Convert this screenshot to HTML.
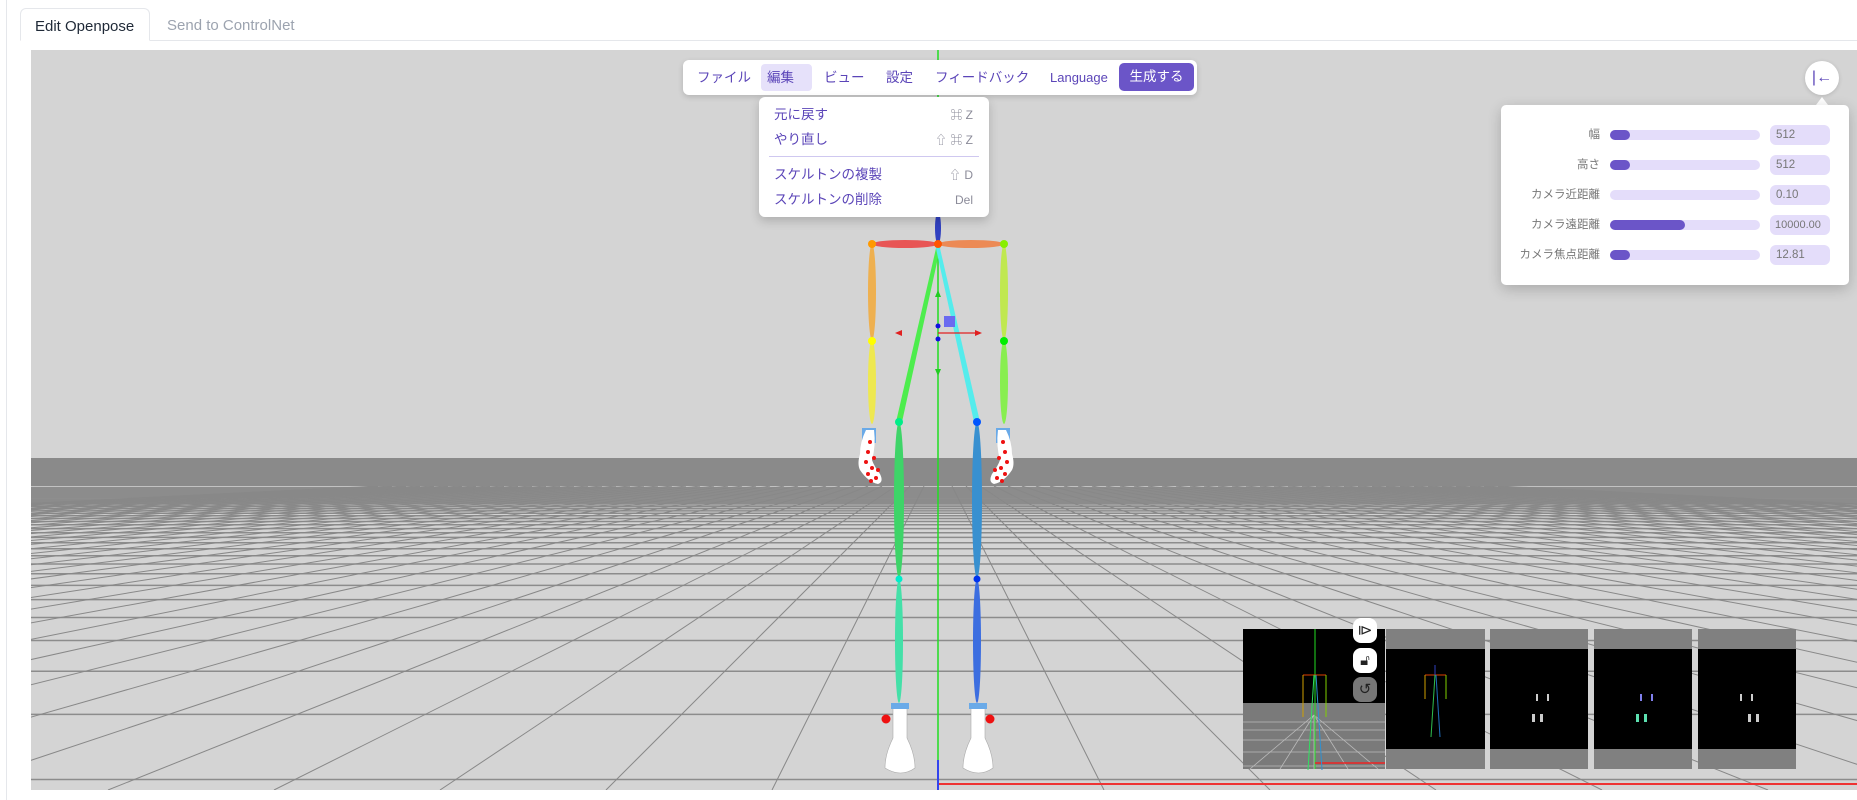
<!DOCTYPE html>
<html><head><meta charset="utf-8">
<style>
*{box-sizing:border-box;margin:0;padding:0}
body{width:1857px;height:790px;overflow:hidden;background:#fff;font-family:"Liberation Sans","Noto Sans CJK JP",sans-serif;position:relative}
.abs{position:absolute}
#outer{left:6px;top:0;width:1860px;height:800px;border-left:1px solid #e5e7eb}
#tabline{left:20px;top:40px;width:1837px;height:1px;background:#e5e7eb}
#tab1{left:20px;top:8px;width:130px;height:33px;border:1px solid #e5e7eb;border-bottom:1px solid #fff;border-radius:6px 6px 0 0;background:#fff;font-size:15px;color:#1f2937;padding:9px 0 0 14px}
#tab2{left:167px;top:17px;font-size:15px;color:#9ca3af}
#scene{left:0;top:0}
#menu{left:683px;top:60px;width:514px;height:35px;background:#fff;border-radius:6px;box-shadow:0 2px 6px rgba(0,0,0,.15);font-size:13.5px;color:#5b45b8}
#menu span{position:absolute;top:1px;line-height:33px}
#dd{left:759px;top:97px;width:230px;height:120px;background:#fff;border-radius:6px;box-shadow:0 4px 10px rgba(0,0,0,.18);font-size:13.5px;color:#5b45b8}
#dd .l{position:absolute;left:15px;line-height:18px}
#dd .r{position:absolute;right:16px;color:#8b8b99;font-size:12px;line-height:18px}
#panel{left:1501px;top:105px;width:348px;height:180px;background:#fff;border-radius:5px;box-shadow:0 4px 14px rgba(0,0,0,.2);font-size:11.5px;color:#777}
.lab{position:absolute;right:249px;text-align:right;white-space:nowrap;line-height:16px}
.trk{position:absolute;left:109px;width:150px;height:10px;border-radius:5px;background:#e4ddfa}
.fill{position:absolute;left:0;top:0;height:10px;border-radius:5px;background:#6b55c8}
.inp{position:absolute;left:269px;width:60px;height:20px;border-radius:6px;background:#e4ddfa;font-size:11.5px;color:#777;padding:4px 0 0 6px}
#circ{left:1805px;top:61px;width:34px;height:34px;border-radius:50%;background:#fff;box-shadow:0 1px 4px rgba(0,0,0,.15);color:#5b45b8;font-size:16px;text-align:center;line-height:33px}
.sbtn{position:absolute;left:1353px;width:24px;height:25px;border-radius:8px;background:#fff;font-size:15px;text-align:center;line-height:25px;color:#222}
</style></head><body>
<div class="abs" id="outer"></div>
<div class="abs" id="tabline"></div>
<div class="abs" id="tab1">Edit Openpose</div>
<div class="abs" id="tab2">Send to ControlNet</div>

<svg id="scene" class="abs" width="1857" height="790" viewBox="0 0 1857 790">
<defs><clipPath id="cv"><rect x="31" y="50" width="1826" height="740"/></clipPath></defs>
<g clip-path="url(#cv)">
<rect x="31" y="50" width="1826" height="740" fill="#d4d4d4"/>
<g id="grid" stroke="#888" stroke-width="1"></g>
<rect x="31" y="458" width="1826" height="28" fill="#8a8a8a"/>
<!-- axes -->
<line x1="938" y1="50" x2="938" y2="790" stroke="#22dd22" stroke-width="1.5"/>
<line x1="938" y1="784" x2="1857" y2="784" stroke="#ee3333" stroke-width="2"/>
<line x1="938" y1="760" x2="938" y2="790" stroke="#3344ee" stroke-width="2"/>
<ellipse cx="938" cy="228" rx="3" ry="16" fill="#3040c0"/>
<ellipse cx="905" cy="244" rx="33" ry="4" fill="#e85555"/>
<ellipse cx="971" cy="244" rx="33" ry="4" fill="#ec8a55"/>
<ellipse cx="872" cy="292" rx="4" ry="48" fill="#eeb050"/>
<ellipse cx="872" cy="382" rx="4" ry="42" fill="#eee850"/>
<ellipse cx="1004" cy="292" rx="4" ry="48" fill="#c0e850"/>
<ellipse cx="1004" cy="382" rx="4" ry="42" fill="#88ee50"/>
<polygon points="937,244 941,244 902,422 896,422" fill="#4ded4d"/>
<polygon points="935,244 939,244 980,422 974,422" fill="#55ecec"/>
<ellipse cx="899" cy="500" rx="5" ry="78" fill="#3ed468"/>
<ellipse cx="899" cy="641" rx="4" ry="62" fill="#44e0a8"/>
<ellipse cx="977" cy="500" rx="5" ry="78" fill="#3890d0"/>
<ellipse cx="977" cy="641" rx="4" ry="62" fill="#3c6ee0"/>
<circle cx="938" cy="244" r="4" fill="#ff5500"/>
<circle cx="872" cy="244" r="4" fill="#ff9900"/>
<circle cx="1004" cy="244" r="4" fill="#88ee00"/>
<circle cx="872" cy="341" r="4" fill="#ffff00"/>
<circle cx="1004" cy="341" r="4" fill="#00ee00"/>
<circle cx="899" cy="422" r="4" fill="#00ee88"/>
<circle cx="977" cy="422" r="4" fill="#0055ff"/>
<circle cx="899" cy="579" r="3.5" fill="#00eecc"/>
<circle cx="977" cy="579" r="3.5" fill="#0033ee"/>
<rect x="944" y="316" width="11" height="11" fill="#6a6af0"/>
<line x1="938" y1="333" x2="980" y2="333" stroke="#e02020" stroke-width="1.2"/>
<polygon points="982,333 975,330 975,336" fill="#e02020"/>
<polygon points="895,333 902,330 902,336" fill="#e02020"/>
<polygon points="938,290 935,297 941,297" fill="#22cc22"/>
<polygon points="938,376 935,369 941,369" fill="#22cc22"/>
<circle cx="938" cy="326" r="2.5" fill="#1010e0"/>
<circle cx="938" cy="339" r="2.5" fill="#1010e0"/>
<rect x="862" y="428" width="14" height="15" fill="#6aaae8"/><rect x="996" y="428" width="14" height="15" fill="#6aaae8"/>
<g fill="#fff">
<path d="M866,430 q-6,12 -6,24 q-3,10 0,16 q8,12 18,14 q6,-2 2,-10 q-6,-8 -8,-14 q4,-14 2,-30z"/>
<path d="M1006,430 q6,12 6,24 q3,10 0,16 q-8,12 -18,14 q-6,-2 -2,-10 q6,-8 8,-14 q-4,-14 -2,-30z"/></g>
<g fill="#ee1111">
<circle cx="870" cy="442" r="2"/><circle cx="868" cy="452" r="2"/><circle cx="874" cy="458" r="2"/><circle cx="866" cy="462" r="2"/><circle cx="872" cy="468" r="2"/><circle cx="878" cy="470" r="2"/><circle cx="868" cy="474" r="2"/><circle cx="876" cy="478" r="2"/><circle cx="871" cy="481" r="2"/>
<circle cx="1003" cy="442" r="2"/><circle cx="1005" cy="452" r="2"/><circle cx="999" cy="458" r="2"/><circle cx="1007" cy="462" r="2"/><circle cx="1001" cy="468" r="2"/><circle cx="995" cy="470" r="2"/><circle cx="1005" cy="474" r="2"/><circle cx="997" cy="478" r="2"/><circle cx="1002" cy="481" r="2"/></g>
<g fill="#fff" stroke="#aaa" stroke-width=".6">
<path d="M893,708 h14 v30 q8,16 8,30 q-14,10 -30,0 q0,-14 8,-30z"/>
<path d="M971,708 h14 v30 q8,16 8,30 q-14,10 -30,0 q0,-14 8,-30z"/></g>
<rect x="891" y="703" width="18" height="6" fill="#6aaae8"/><rect x="969" y="703" width="18" height="6" fill="#6aaae8"/>
<circle cx="886" cy="719" r="4.5" fill="#ee1111"/><circle cx="990" cy="719" r="4.5" fill="#ee1111"/>
<rect x="1243" y="629" width="142" height="140" fill="#000"/>
<rect x="1243" y="703" width="142" height="66" fill="#7a7a7a"/>
<g stroke="#bbb" stroke-width=".8">
<line x1="1243" y1="722" x2="1385" y2="722"/><line x1="1243" y1="730" x2="1385" y2="730"/><line x1="1243" y1="740" x2="1385" y2="740"/><line x1="1243" y1="752" x2="1385" y2="752"/><line x1="1243" y1="766" x2="1385" y2="766"/>
<line x1="1314" y1="715" x2="1250" y2="769"/><line x1="1314" y1="715" x2="1280" y2="769"/><line x1="1314" y1="715" x2="1314" y2="769"/><line x1="1314" y1="715" x2="1348" y2="769"/><line x1="1314" y1="715" x2="1378" y2="769"/></g>
<line x1="1315" y1="629" x2="1315" y2="769" stroke="#22dd22"/>
<line x1="1315" y1="763" x2="1385" y2="763" stroke="#ee2222" stroke-width="1.5"/>
<g stroke-width="1"><line x1="1303" y1="675" x2="1326" y2="675" stroke="#e04000"/><line x1="1303" y1="675" x2="1303" y2="717" stroke="#d0a000"/><line x1="1326" y1="675" x2="1326" y2="717" stroke="#80d000"/><line x1="1314" y1="675" x2="1308" y2="770" stroke="#30e060"/><line x1="1316" y1="675" x2="1322" y2="770" stroke="#3090d0"/></g>
<rect x="1386" y="629" width="99" height="140" fill="#808080"/><rect x="1386" y="649" width="99" height="100" fill="#000"/>
<rect x="1490" y="629" width="98" height="140" fill="#808080"/><rect x="1490" y="649" width="98" height="100" fill="#000"/>
<rect x="1594" y="629" width="98" height="140" fill="#808080"/><rect x="1594" y="649" width="98" height="100" fill="#000"/>
<rect x="1698" y="629" width="98" height="140" fill="#808080"/><rect x="1698" y="649" width="98" height="100" fill="#000"/>
<g stroke-width="1"><line x1="1425" y1="675" x2="1446" y2="675" stroke="#e04000"/><line x1="1425" y1="675" x2="1425" y2="699" stroke="#d0a000"/><line x1="1446" y1="675" x2="1446" y2="699" stroke="#80d000"/><line x1="1435" y1="675" x2="1431" y2="737" stroke="#30c050"/><line x1="1436" y1="675" x2="1440" y2="737" stroke="#2070c0"/><line x1="1435" y1="665" x2="1435" y2="675" stroke="#3040c0"/></g>
<g fill="#ccc"><rect x="1532" y="714" width="3" height="8"/><rect x="1540" y="714" width="3" height="8"/><rect x="1536" y="694" width="2" height="7"/><rect x="1547" y="694" width="2" height="7"/>
<rect x="1748" y="714" width="3" height="8"/><rect x="1756" y="714" width="3" height="8"/><rect x="1740" y="694" width="2" height="7"/><rect x="1751" y="694" width="2" height="7"/></g>
<g><rect x="1636" y="714" width="3" height="8" fill="#5ce0b0"/><rect x="1644" y="714" width="3" height="8" fill="#5ce0b0"/><rect x="1640" y="694" width="2" height="7" fill="#8080ee"/><rect x="1651" y="694" width="2" height="7" fill="#8080ee"/></g>
</g>
</svg>
<script>
(function(){var g=document.getElementById('grid'),s='';var vx=938,vy=458;
for(var k=-1;k<40;k++){var d=1/(0.00311+0.00079*k);var y=vy+d;if(y>790||y<486)continue;s+='<line x1="31" y1="'+y.toFixed(1)+'" x2="1857" y2="'+y.toFixed(1)+'" stroke-width="1.5" stroke="#8c8c8c"/>';}
for(var i=-40;i<=40;i++){var y1=486,y2=790;s+='<line x1="'+(vx+i*0.5*(y1-vy)).toFixed(1)+'" y1="'+y1+'" x2="'+(vx+i*0.5*(y2-vy)).toFixed(1)+'" y2="'+y2+'"/>';}
g.innerHTML=s;})();
</script>

<div class="abs" id="menu">
<div class="abs" style="left:78px;top:4px;width:51px;height:27px;background:#e6e1fa;border-radius:4px"></div>
<span style="left:14px">ファイル</span>
<span style="left:84px">編集</span>
<span style="left:141px">ビュー</span>
<span style="left:203px">設定</span>
<span style="left:252px">フィードバック</span>
<span style="left:367px;font-size:13px">Language</span>
<div class="abs" style="left:436px;top:3px;width:75px;height:28px;background:#6b55c8;border-radius:5px;color:#fff;text-align:center;line-height:28px">生成する</div>
</div>

<div class="abs" id="dd">
<div class="l" style="top:9px">元に戻す</div><div class="r" style="top:9px">⌘ Z</div>
<div class="l" style="top:34px">やり直し</div><div class="r" style="top:34px">⇧ ⌘ Z</div>
<div class="abs" style="left:10px;top:59px;width:210px;height:1px;background:#cfc8f0"></div>
<div class="l" style="top:69px">スケルトンの複製</div><div class="r" style="top:69px">⇧ D</div>
<div class="l" style="top:94px">スケルトンの削除</div><div class="r" style="top:94px">Del</div>
</div>

<div class="abs" id="circ">|←</div>
<div class="abs" style="left:1816px;top:97px;width:0;height:0;border-left:6px solid transparent;border-right:6px solid transparent;border-bottom:8px solid #fff"></div>
<div class="abs" id="panel">
<div class="lab" style="top:22px">幅</div><div class="trk" style="top:25px"><div class="fill" style="width:20px"></div></div><div class="inp" style="top:20px">512</div>
<div class="lab" style="top:52px">高さ</div><div class="trk" style="top:55px"><div class="fill" style="width:20px"></div></div><div class="inp" style="top:50px">512</div>
<div class="lab" style="top:82px">カメラ近距離</div><div class="trk" style="top:85px"></div><div class="inp" style="top:80px">0.10</div>
<div class="lab" style="top:112px">カメラ遠距離</div><div class="trk" style="top:115px"><div class="fill" style="width:75px"></div></div><div class="inp" style="top:110px;font-size:11px;padding-left:5px">10000.00</div>
<div class="lab" style="top:142px">カメラ焦点距離</div><div class="trk" style="top:145px"><div class="fill" style="width:20px"></div></div><div class="inp" style="top:140px">12.81</div>
</div>

<div class="sbtn" style="top:618px">⧐</div>
<div class="sbtn" style="top:648px">🔓︎</div>
<div class="sbtn" style="top:677px;background:#777;color:#222">↺</div>
</body></html>
